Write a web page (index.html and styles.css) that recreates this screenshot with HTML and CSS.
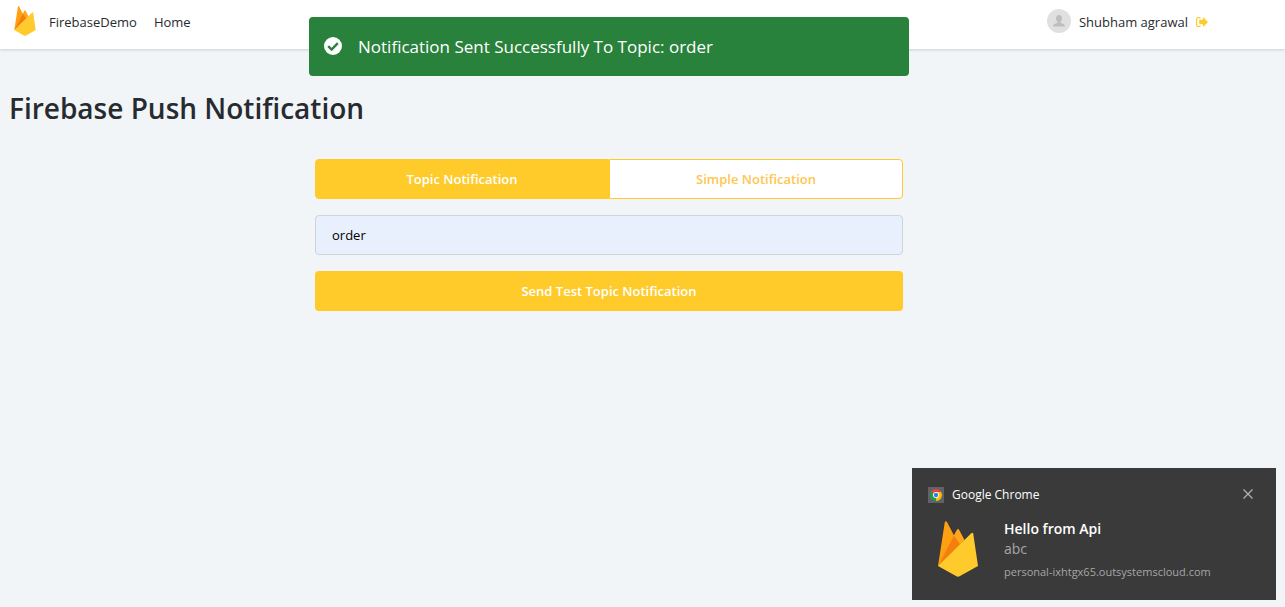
FILE: index.html
```html
<!DOCTYPE html>
<html lang="en">
	<head>
		<meta charset="UTF-8" />
		<meta name="viewport" content="width=device-width, initial-scale=1.0" />
		<title>Firebase Push Notification</title>
		<link rel="stylesheet" href="styles.css">
	</head>
	<body>
		<svg class="defs" aria-hidden="true">
			<symbol id="flame" viewBox="0 0 40 56">
				<path fill="#ffa012" d="M0 45 6.800 1.200Q7.500-.8 9 1L16 14.500 20 20 4 43z" />
				<path fill="#ffa61c" d="M15.500 15 18.800 9Q20 7 21.200 9L26.500 19 20 26z" />
				<path fill="#f57f0c" d="M0 45 16 14.500 22.500 24z" />
				<path fill="#ffca2b" d="M0 45 33 12.500Q35 11 35.300 13L40 45 22 55Q20 56.400 18 55z" />
			</symbol>
		</svg>

		<header class="header">
			<div class="container topbar">
				<nav class="menu">
					<svg class="logo"><use href="#flame" /></svg>
					<a href="#">FirebaseDemo</a>
					<a href="#">Home</a>
				</nav>
				<div class="user">
					<svg class="avatar" viewBox="0 0 24 24">
						<circle cx="12" cy="12" r="12" fill="#e0e0e0" />
						<path fill="#bdbdbd" d="M12 6c-1.900 0-3 1.400-3 3.200 0 1.500.6 2.900 1.500 3.600v1L7.500 15Q6 15.600 6 17.500h12q0-1.900-1.500-2.500l-3-1.200v-1c.9-.7 1.500-2.100 1.500-3.600C15 7.400 13.900 6 12 6z" />
					</svg>
					<span>Shubham agrawal</span>
					<a href="#" aria-label="Logout">
						<svg class="logout" viewBox="0 0 12 12">
							<path fill="none" stroke="#fecb2b" stroke-width="1.200" d="M4.500 1.600H2Q.6 1.600.6 3v6Q.6 10.400 2 10.400h2.500" />
							<path fill="#fecb2b" d="M3.200 3.800H7V1L12 6 7 11V8.200H3.200z" />
						</svg>
					</a>
				</div>
			</div>
		</header>

		<main class="container">
			<h1>Firebase Push Notification</h1>
			<form class="form">
				<div class="tabs">
					<button type="button" class="active">Topic Notification</button>
					<button type="button">Simple Notification</button>
				</div>
				<input type="text" aria-label="Topic" value="order">
				<button type="button" class="send">Send Test Topic Notification</button>
			</form>
		</main>

		<div class="toast" role="status">
			<svg viewBox="0 0 18 18">
				<circle cx="9" cy="9" r="9" fill="#fff" />
				<path fill="none" stroke="#29823b" stroke-width="2.400" d="M4.200 9.200 7.600 12.500 13.800 6.200" />
			</svg>
			<span>Notification Sent Successfully To Topic: order</span>
		</div>

		<aside class="push">
			<div class="push-head">
				<svg class="chrome" viewBox="0 0 16 16">
					<path fill="#5f6368" d="M0 0h16v16H0z" />
					<path fill="#ea4335" d="M8 8 2.800 5A6 6 0 0 1 13.200 5z" />
					<path fill="#fbbc05" d="M8 8V5h5.200A6 6 0 0 1 8 14z" />
					<path fill="#1e9e4a" d="M8 8v6A6 6 0 0 1 2.800 5z" />
					<circle cx="8" cy="8" r="3" fill="#fff" />
					<circle cx="8" cy="8" r="2.200" fill="#2f7de9" />
				</svg>
				<span>Google Chrome</span>
				<button type="button" aria-label="Close">
					<svg viewBox="0 0 10 10"><path fill="none" stroke="#b4b4b4" stroke-width="1.200" d="m.5.5 9 9m0-9-9 9" /></svg>
				</button>
			</div>
			<div class="push-body">
				<svg class="push-logo"><use href="#flame" /></svg>
				<div>
					<h2>Hello from Api</h2>
					<p>abc</p>
					<small>personal-ixhtgx65.outsystemscloud.com</small>
				</div>
			</div>
		</aside>
	</body>
</html>
```
FILE: styles.css
```css
* {
	box-sizing: border-box;
	margin: 0;
	padding: 0;
}
body {
	min-height: 100vh;
	background-color: #f1f5f8;
	color: #272b30;
	font-family: "Segoe UI", "Open Sans", "Noto Sans", sans-serif;
	font-size: 13px;
	line-height: 20px;
}
a {
	color: inherit;
	text-decoration: none;
}
svg {
	display: block;
	flex: none;
}
button {
	border: none;
	font: inherit;
	cursor: pointer;
}
.defs {
	position: absolute;
	width: 0;
	height: 0;
}
.container {
	max-width: 1218px;
	padding: 0 9px;
}
.header {
	background-color: #fff;
	box-shadow: 0 1px 3px rgba(0, 0, 0, 0.15);
}
.topbar {
	display: flex;
	justify-content: space-between;
	height: 49px;
	padding-bottom: 6px;

	.menu {
		display: flex;
		align-items: center;
		gap: 17px;
		padding-left: 5px;
	}
	.logo {
		width: 22px;
		height: 30px;
		margin: 0 -4px 2px 0;
	}
	.user {
		display: flex;
		align-items: center;
		gap: 8px;
		padding-right: 1px;
	}
	.avatar {
		width: 24px;
		height: 24px;
		margin-bottom: 2px;
	}
	.logout {
		width: 12px;
		height: 12px;
	}
}
h1 {
	padding-top: 38px;
	font-size: 28px;
	font-weight: 600;
	line-height: 42px;
}
.form {
	display: flex;
	flex-direction: column;
	gap: 16px;
	width: 49%;
	margin: 30px auto 0;

	button,
	input {
		height: 40px;
		border-radius: 4px;
	}
	button {
		background-color: #fecb2b;
		color: #fff;
		font-weight: 600;
	}
	input {
		width: 100%;
		padding: 0 16px;
		border: 1px solid #ced4da;
		background-color: #e8effd;
		color: #000;
		font: inherit;
	}
	.tabs {
		display: flex;

		button {
			flex: 1;
			border: 1px solid #fecb2b;
			border-radius: 0 4px 4px 0;
			background-color: #fff;
			color: #fec650;
		}
		.active {
			border-radius: 4px 0 0 4px;
			background-color: #fecb2b;
			color: #fff;
		}
	}
}
.toast {
	position: fixed;
	top: 17px;
	left: 309px;
	display: flex;
	align-items: center;
	gap: 16px;
	width: 600px;
	height: 59px;
	padding: 0 15px;
	border-radius: 4px;
	background-color: #29823b;
	color: #fff;
	font-size: 17px;

	svg {
		width: 18px;
		height: 18px;
		margin-bottom: 2px;
	}
}
.push {
	position: fixed;
	right: 9px;
	bottom: 7px;
	width: 364px;
	height: 132px;
	padding: 17px 16px;
	background-color: #3a3a3a;
	color: #fff;

	.push-head {
		display: flex;
		align-items: center;
		gap: 8px;
		font-size: 12px;
	}
	.chrome {
		width: 16px;
		height: 16px;
	}
	.push-head button {
		margin-left: auto;
		padding: 4px 7px 6px;
		background: none;

		svg {
			width: 10px;
			height: 10px;
		}
	}
	.push-body {
		display: flex;
		gap: 26px;
		padding: 14px 10px;
	}
	.push-logo {
		width: 40px;
		height: 56px;
		margin-top: 2px;
	}
	h2 {
		font-size: 14px;
		font-weight: 600;
		line-height: 20px;
	}
	p {
		color: #a6a6a6;
		font-size: 14px;
	}
	small {
		display: block;
		margin-top: 3px;
		color: #a6a6a6;
		font-size: 11px;
	}
}
```
